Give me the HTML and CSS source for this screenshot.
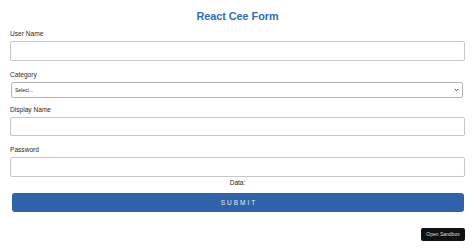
FILE: index.html
```html
<!DOCTYPE html>
<html>
<head>
<meta charset="utf-8">
<link rel="stylesheet" href="styles.css">
</head>
<body>
<form class="form">
  <h1 class="title">React Cee Form</h1>
  <div class="field">
    <label class="label">User Name</label>
    <input class="input" type="text">
  </div>
  <div class="field field-select">
    <label class="label">Category</label>
    <div class="select-wrap">
      <select class="select"><option>Select...</option></select>
      <svg class="arrow" width="5" height="4" viewBox="0 0 5 4"><path d="M0.8 1 L2.5 2.7 L4.2 1" fill="none" stroke="#333" stroke-width="1"/></svg>
    </div>
  </div>
  <div class="field">
    <label class="label">Display Name</label>
    <input class="input" type="text">
  </div>
  <div class="field field-last">
    <label class="label">Password</label>
    <input class="input" type="password">
  </div>
  <div class="data">Data:</div>
  <button type="button" class="submit">SUBMIT</button>
</form>
<a class="sandbox">Open Sandbox</a>
</body>
</html>
```

FILE: styles.css
```css
html, body {
  margin: 0;
  background: #fff;
}
body {
  padding: 10px 9px 0 10px;
  font-family: "Liberation Sans", Arial, sans-serif;
}
.form {
  display: flex;
  flex-direction: column;
}
.title {
  margin: 0 0 8px;
  font-size: 10.8px;
  line-height: 12px;
  font-weight: bold;
  text-align: center;
  color: #2d6cc0;
}
.field {
  display: flex;
  flex-direction: column;
  margin-bottom: 10px;
}
.field-select {
  margin-bottom: 8px;
}
.field-last {
  margin-bottom: 2px;
}
.label {
  display: block;
  font-size: 6.6px;
  line-height: 8px;
  color: #2a2a2a;
  margin-bottom: 3px;
}
.input {
  box-sizing: border-box;
  display: block;
  width: 100%;
  height: 19.5px;
  margin: 0;
  border: 1px solid #c6c6c6;
  border-radius: 2px;
  background: #fff;
}
.select-wrap {
  position: relative;
  margin-left: 1px;
  width: 452px;
  height: 16px;
}
.select {
  -webkit-appearance: none;
  appearance: none;
  display: block;
  box-sizing: border-box;
  width: 100%;
  height: 16px;
  margin: 0;
  font-size: 5px;
  font-family: "Liberation Sans", Arial, sans-serif;
  color: #222;
  border: 1px solid #b5b5b5;
  border-radius: 2px;
  background: #fff;
  padding: 0 3px;
}
.arrow {
  position: absolute;
  right: 4px;
  top: 6.5px;
}
.data {
  font-size: 6.5px;
  line-height: 7px;
  color: #222;
  text-align: center;
  margin-bottom: 7.5px;
}
.submit {
  box-sizing: border-box;
  margin: 0 1px 0 2px;
  height: 19px;
  border: none;
  border-radius: 3px;
  background: #2f62a8;
  color: #e4ecf7;
  font-family: "Liberation Sans", Arial, sans-serif;
  font-size: 6.5px;
  letter-spacing: 2px;
  padding: 0 0 0 2px;
}
.sandbox {
  position: fixed;
  right: 9px;
  bottom: 7px;
  width: 44px;
  height: 13.5px;
  box-sizing: border-box;
  display: flex;
  align-items: center;
  justify-content: center;
  background: #111;
  border-radius: 2px;
  color: #ddd;
  font-size: 5px;
  white-space: nowrap;
}
```
